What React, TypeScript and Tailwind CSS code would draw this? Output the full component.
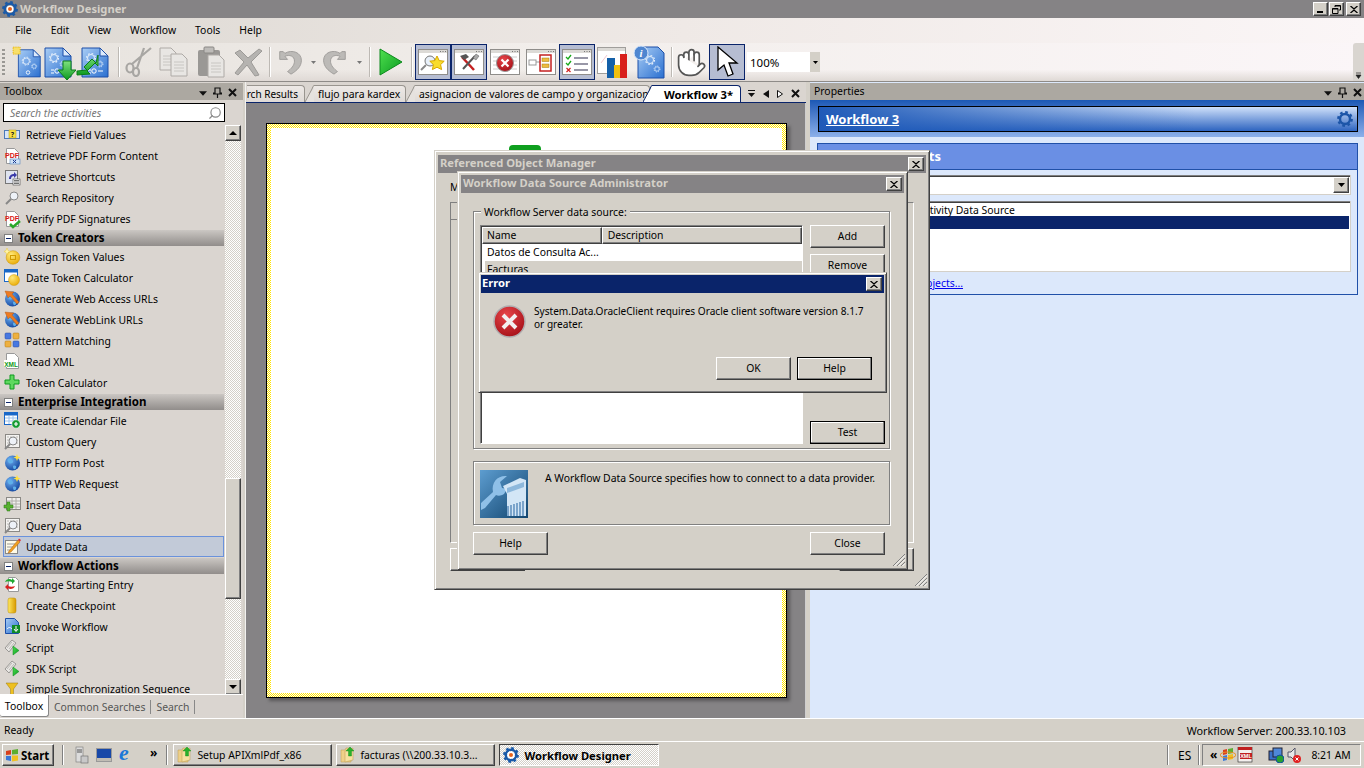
import React from "react";
import { Hand, Search } from "lucide-react";

const raised = "border border-t-white border-l-white border-r-[#404040] border-b-[#404040] shadow-[inset_-1px_-1px_#808080]";
const dith = "bg-[image:repeating-conic-gradient(#ffffff_0_25%,#d4d0c8_0_50%)] bg-[length:2px_2px]";

function Defs() {
  return (
    <svg className="absolute w-0 h-0">
      <defs>
        <linearGradient id="dblue" x1="0" y1="0" x2="1" y2="1"><stop offset="0" stopColor="#a9cdf5" /><stop offset="1" stopColor="#2a6fd0" /></linearGradient>
        <linearGradient id="green" x1="0" y1="0" x2="0" y2="1"><stop offset="0" stopColor="#7fe27f" /><stop offset="1" stopColor="#0c9a1e" /></linearGradient>
        <linearGradient id="gplay" x1="0" y1="0" x2="1" y2="1"><stop offset="0" stopColor="#4fe04f" /><stop offset="1" stopColor="#0a9a20" /></linearGradient>
        <radialGradient id="globe" cx=".35" cy=".3" r=".8"><stop offset="0" stopColor="#6fb0f2" /><stop offset="1" stopColor="#0d3f98" /></radialGradient>
        <radialGradient id="coin" cx=".35" cy=".3" r=".8"><stop offset="0" stopColor="#ffe97a" /><stop offset="1" stopColor="#e8a800" /></radialGradient>
        <radialGradient id="err" cx=".4" cy=".3" r=".8"><stop offset="0" stopColor="#e8464a" /><stop offset="1" stopColor="#a00c14" /></radialGradient>
        <linearGradient id="ds" x1="0" y1="0" x2="1" y2="1"><stop offset="0" stopColor="#5d9dd0" /><stop offset="1" stopColor="#12456f" /></linearGradient>
        <linearGradient id="cyl" x1="0" y1="0" x2="1" y2="0"><stop offset="0" stopColor="#ffe860" /><stop offset="1" stopColor="#d89a00" /></linearGradient>
      </defs>
    </svg>
  );
}

function Gear({ x, y, r, c = "#fff", w = 1 }: { x: number; y: number; r: number; c?: string; w?: number }) {
  const d = (2 * Math.PI * (r + w)) / 16;
  return (
    <g fill="none" stroke={c}>
      <circle cx={x} cy={y} r={r} strokeWidth={w} />
      <circle cx={x} cy={y} r={r + w} strokeWidth={w * 1.1} strokeDasharray={`${d} ${d}`} />
    </g>
  );
}

function AppGear({ s = 16 }: { s?: number }) {
  return (
    <svg width={s} height={s} viewBox="0 0 16 16" className="shrink-0">
      <circle cx="8" cy="8" r="5.2" fill="none" stroke="#1a5aa8" strokeWidth="2.6" />
      <circle cx="8" cy="8" r="6.8" fill="none" stroke="#1a5aa8" strokeWidth="2.2" strokeDasharray="2.67 2.67" />
      <circle cx="8" cy="8" r="3.6" fill="#fff" />
      <circle cx="8" cy="8" r="2" fill="#e8641a" />
    </svg>
  );
}

function BlueDoc({ children }: { children?: React.ReactNode }) {
  return (
    <svg width="32" height="34" viewBox="0 0 32 34" className="overflow-visible">
      <path d="M3 3h18l8 8v21H3z" fill="url(#dblue)" stroke="#1c4fa8" />
      <path d="M21 3l8 8h-8z" fill="#dbeafc" stroke="#1c4fa8" />
      <Gear x={12} y={13} r={3.5} c="#e6f0fc" w={1} />
      <Gear x={21} y={19} r={2.2} c="#cfe2f8" w={.8} />
      <circle cx="15" cy="26" r="2.2" fill="none" stroke="#fff" />
      <path d="M9 25h3M9 28h3M19 26h5" stroke="#fff" strokeWidth="1.2" />
      {children}
    </svg>
  );
}

function GrayDoc({ x = 0, y = 0 }: { x?: number; y?: number }) {
  return (
    <g transform={`translate(${x} ${y})`}>
      <path d="M0 0h11l5 5v17H0z" fill="#e8e6e3" stroke="#aeaaa6" />
      <path d="M3 8h10M3 11h10M3 14h10M3 17h10" stroke="#c8c6c2" />
    </g>
  );
}

function WinIcon({ children }: { children?: React.ReactNode }) {
  return (
    <svg width="30" height="30" viewBox="0 0 30 30">
      <rect x=".5" y="2.5" width="29" height="25" fill="#fff" stroke="#8f8d8a" />
      <rect x="1" y="3" width="28" height="3" fill="#dcdad6" />
      <path d="M22 4.5h1M24.5 4.5h1M27 4.5h1" stroke="#777" />
      {children}
    </svg>
  );
}

function Pressed({ children }: { children: React.ReactNode }) {
  return <div className="w-[36px] h-[36px] flex items-center justify-center border border-[#0a246a] bg-[#b6bdd2] shrink-0">{children}</div>;
}

function Sep({ ml }: { ml: string }) {
  return <div className={`w-px h-[30px] bg-[#bdb9b4] shadow-[1px_0_#fff] shrink-0 ${ml}`} />;
}

function Drop({ ml }: { ml: string }) {
  return <svg width="5" height="3" className={`shrink-0 ${ml}`} viewBox="0 0 5 3"><path d="M0 0h5L2.5 3z" fill="#777" /></svg>;
}

function Toolbar() {
  const U = "M6 4L2 4L2 13L11 13L8 9.5C13 7 19 9 19 15C19 20 15 24 11 27L15 30C22 26 27 21 27 14C27 5 16 1 8 6z";
  return (
    <div className="h-[38px] relative flex items-center pl-[2px] bg-[image:linear-gradient(to_bottom,transparent_70%,#dfd9d5),linear-gradient(to_right,#e6e2dd,#f2eeeb_40%,#fbf6f8)]">
      <div className="w-[3px] h-[26px] shrink-0 bg-[image:repeating-linear-gradient(to_bottom,#9a9894_0_2px,transparent_2px_4px)]" />
      <div className="ml-[9px] shrink-0 w-[26px] relative">
        <svg width="28" height="34" viewBox="0 0 32 34" className="overflow-visible">
          <path d="M5 3h17l8 8v23H5z" fill="url(#dblue)" stroke="#1c4fa8" />
          <path d="M22 3l8 8h-8z" fill="#dbeafc" stroke="#1c4fa8" />
          <Gear x={14} y={16} r={3.6} c="#e6f0fc" />
          <Gear x={23} y={22} r={2.2} c="#cfe2f8" w={.8} />
          <circle cx="16" cy="29" r="2" fill="none" stroke="#fff" />
          <path d="M-1 0h8v8h-8z" fill="#f7df6a" stroke="#eab400" strokeDasharray="1.5 1" />
        </svg>
      </div>
      <div className="ml-[2px] shrink-0"><BlueDoc><path d="M21 16h8v9h5L25 35l-9-10h5z" fill="url(#green)" stroke="#0d7d18" /></BlueDoc></div>
      <div className="ml-[5px] shrink-0"><BlueDoc><path d="M-2 26l10-1-3-3 8-8 4 4 2-8v11l-3-3-8 8 3 3-13 1z" fill="url(#green)" stroke="#0d7d18" /></BlueDoc></div>
      <Sep ml="ml-[7px]" />
      <svg width="28" height="30" viewBox="0 0 28 30" className="ml-[6px] shrink-0">
        <g fill="none" stroke="#a8a6a3" strokeWidth="2.200">
          <ellipse cx="5" cy="21" rx="3.500" ry="4.500" />
          <ellipse cx="11" cy="25" rx="3" ry="4" />
          <path d="M7 17L26 1M12 21L19 1" />
        </g>
      </svg>
      <svg width="30" height="30" viewBox="0 0 30 30" className="ml-[6px] shrink-0"><GrayDoc x={1} y={1} /><GrayDoc x={12} y={7} /></svg>
      <svg width="30" height="32" viewBox="0 0 30 32" className="ml-[8px] shrink-0"><rect x="1" y="4" width="22" height="26" rx="2" fill="#9a9895" /><rect x="7" y="1" width="10" height="6" rx="1" fill="#bdbbb8" stroke="#8a8885" /><GrayDoc x={11} y={9} /></svg>
      <svg width="30" height="30" viewBox="0 0 30 30" className="ml-[6px] shrink-0"><path d="M2 6l5-3 8 8L26 2l3 2-11 11 8 13-4 1-8-11-9 10-3-2 9-11z" fill="#b5b3b0" stroke="#9c9a97" /></svg>
      <Sep ml="ml-[6px]" />
      <svg width="26" height="32" viewBox="0 0 30 32" className="ml-[8px] shrink-0"><path d={U} fill="#bcbab7" stroke="#9a9895" /></svg>
      <Drop ml="ml-[7px]" />
      <svg width="26" height="32" viewBox="0 0 30 32" className="ml-[5px] shrink-0 -scale-x-100"><path d={U} fill="#bcbab7" stroke="#9a9895" /></svg>
      <Drop ml="ml-[10px]" />
      <Sep ml="ml-[7px]" />
      <svg width="24" height="28" viewBox="0 0 24 28" className="ml-[9px] shrink-0"><path d="M1 1l22 13L1 27z" fill="url(#gplay)" stroke="#0c8a1c" /></svg>
      <Sep ml="ml-[8px]" />
      <div className="ml-[3px] flex shrink-0">
        <Pressed><WinIcon><circle cx="12" cy="14" r="5" fill="#e8f0fa" stroke="#777" /><path d="M8 18l-5 5" stroke="#888" strokeWidth="2" /><path d="M19 9l2.2 4.6 5 .6-3.6 3.4 1 5-4.6-2.4-4.6 2.4 1-5-3.6-3.4 5-.6z" fill="#f8dc2c" stroke="#d8a800" /></WinIcon></Pressed>
        <Pressed><WinIcon><path d="M8 10l12 13" stroke="#c42020" strokeWidth="2.5" /><path d="M21 9L9 22" stroke="#555" strokeWidth="2" /><path d="M6 9l6-2 3 3-5 3z" fill="#555" /><path d="M19 11l3-4 3 2-3 4z" fill="#aaa" stroke="#555" strokeWidth=".5" /></WinIcon></Pressed>
      </div>
      <div className="ml-[3px] shrink-0"><WinIcon><path d="M3 10h24M3 14h24M3 18h24M3 22h24" stroke="#ccc" /><circle cx="15" cy="16" r="8.5" fill="url(#err)" stroke="#999" /><path d="M11.5 12.5l7 7M18.5 12.5l-7 7" stroke="#fff" strokeWidth="2.2" /></WinIcon></div>
      <div className="ml-[6px] shrink-0"><WinIcon><rect x="3" y="13" width="7" height="5" fill="#fff" stroke="#999" /><path d="M10 15h4" stroke="#999" /><rect x="14" y="8" width="11" height="16" fill="#fff" stroke="#c42020" strokeWidth="1.5" /><rect x="16" y="11" width="7" height="3.5" fill="#eebc40" stroke="#a07a10" strokeWidth=".5" /><rect x="16" y="17" width="7" height="3.5" fill="#eebc40" stroke="#a07a10" strokeWidth=".5" /></WinIcon></div>
      <div className="ml-[3px] shrink-0"><Pressed><WinIcon><path d="M4 10l2 2 3-4M4 16l2 2 3-4" fill="none" stroke="#18a818" strokeWidth="1.3" /><path d="M4.5 21l4 4M8.5 21l-4 4" stroke="#d02020" strokeWidth="1.2" /><path d="M12 11h14M12 17h14M12 23h14" stroke="#77758a" strokeWidth="1.3" /></WinIcon></Pressed></div>
      <svg width="32" height="34" viewBox="0 0 32 34" className="ml-[2px] shrink-0">
        <rect x=".5" y="2.5" width="28" height="26" fill="#fff" stroke="#a09e9b" /><rect x="1" y="3" width="27" height="3" fill="#dcdad6" />
        <path d="M4 18l6-8" stroke="#f2c8d0" />
        <path d="M10 13h8v20h-8z" fill="#1560a8" /><path d="M17 20h6v13h-6z" fill="#f0c010" /><path d="M23 9h7v24h-7z" fill="#d8201c" />
      </svg>
      <svg width="32" height="34" viewBox="0 0 32 34" className="ml-[4px] shrink-0 overflow-visible">
        <path d="M5 2h20l6 6v25H5z" fill="url(#dblue)" stroke="#1c4fa8" />
        <Gear x={17} y={15} r={3.5} c="#e6f0fc" /><Gear x={24} y={24} r={2.2} c="#cfe2f8" w={.8} />
        <circle cx="8" cy="8" r="7" fill="#4f86d0" stroke="#dbeafc" />
        <text x="8" y="12" textAnchor="middle" fontSize="11" fontWeight="700" fontStyle="italic" fill="#fff" fontFamily="Liberation Serif, serif">i</text>
      </svg>
      <Sep ml="ml-[6px]" />
      <Hand size={31} strokeWidth={1.3} color="#555" fill="#fff" className="ml-[4px] shrink-0 -scale-x-100" />
      <div className="ml-[2px] shrink-0">
        <Pressed><svg width="26" height="32" viewBox="0 0 26 32"><path d="M4 1v23l6-5 4 11 5-2-4-11h8z" fill="#fff" stroke="#000" strokeWidth="1.3" /></svg></Pressed>
      </div>
      <div className="ml-[2px] w-[73px] h-[20px] bg-white flex items-center justify-between shrink-0">
        <span className="pl-[3px] text-[11.5px]">100%</span>
        <div className="w-[10px] h-full bg-[#d4d0c8] flex items-center justify-center"><svg width="5" height="3"><path d="M0 0h5L2.5 3z" fill="#000" /></svg></div>
      </div>
      <div className="absolute right-0 top-0 bottom-0 w-[11px] bg-[#d9d5d0] rounded-tl-[3px] flex items-end justify-center pb-[2px]">
        <svg width="7" height="7" viewBox="0 0 7 7"><path d="M1 1h5M1 3h5L3.500 6.500z" stroke="#222" fill="#222" strokeWidth=".7" /></svg>
      </div>
    </div>
  );
}

const PanelBtns = () => (
  <div className="flex items-center gap-[6px] pt-[2px]">
    <svg width="8" height="5" viewBox="0 0 9 5" className="mt-[2px]"><path d="M0 0h9L4.500 5z" fill="#111" /></svg>
    <svg width="9" height="11" viewBox="0 0 9 11"><path d="M2 1h5v5h2v1H0V6h2zM4.500 7v4" fill="none" stroke="#111" strokeWidth="1.200" /></svg>
    <svg width="9" height="9" viewBox="0 0 9 9"><path d="M1 1l7 7M8 1L1 8" stroke="#111" strokeWidth="2" /></svg>
  </div>
);

/* small icons */
const S = ({ children }: { children: React.ReactNode }) => <svg width="17" height="17" viewBox="0 0 17 17" className="shrink-0 overflow-visible">{children}</svg>;
const Page = () => <><path d="M2.500 .5h8l4 4v11h-12z" fill="#fff" stroke="#999" /></>;
const Pdf = () => <text x="8" y="10" textAnchor="middle" fontSize="7" fontWeight="700" fill="#d81818" fontFamily="Liberation Sans, sans-serif">PDF</text>;
const Mag = ({ x = 0, y = 0, c = "#ddd" }: { x?: number; y?: number; c?: string }) => <g transform={`translate(${x} ${y})`}><circle cx="10" cy="6" r="4" fill={c === "#ddd" ? "#eef2f8" : c} stroke="#888" /><path d="M7 9l-5 5" stroke="#888" strokeWidth="2" /></g>;
const Globe = ({ spark, arrow }: { spark?: boolean; arrow?: boolean }) => (
  <>
    <circle cx="8.500" cy="9" r="7.500" fill="url(#globe)" />
    <path d="M4 5c2-2 4 0 5 2s-3 3-4 2-2-3-1-4zM9 12c2-1 4 0 3 2s-3 2-3-2z" fill="#5fb0ea" />
    {spark && <path d="M13 0l1 2.500 2.500 1-2.500 1-1 2.500-1-2.500-2.500-1 2.500-1z" fill="#ffe040" />}
    {arrow && <path d="M1 1l9 1-2 2 7 8-2 2-7-8-2 2z" fill="#ee7a20" stroke="#a85010" strokeWidth=".4" />}
  </>
);
const WinSm = () => <><rect x="1.500" y="1.500" width="14" height="13" fill="#f4f3f1" stroke="#8b8985" /><path d="M3 4h11M3 7h11M3 10h11" stroke="#b8b6b2" strokeDasharray="2 1" /></>;

const icons: Record<string, React.ReactNode> = {
  field: <S><rect x=".5" y="3.500" width="15" height="8" fill="#d6e4f6" stroke="#4a78b8" /><rect x="5" y="3" width="7" height="8" fill="#f6e040" stroke="#b89810" strokeWidth=".5" /><text x="8.500" y="10" textAnchor="middle" fontSize="7" fontWeight="700" fill="#222">?</text></S>,
  pdfForm: <S><Page /><Pdf /><rect x="6" y="11" width="10" height="5" fill="#cfe2f6" stroke="#5888c0" strokeWidth=".6" /><path d="M9 12l3 3M12 12l-3 3" stroke="#1a3a90" /></S>,
  short: <S><rect x="1.500" y="1.500" width="12" height="13" fill="#dfe3ee" stroke="#777" /><path d="M5 10c0-4 3-5 5-5V3l3 3-3 3V7c-2 0-3 1-3 3z" fill="#3a3aa8" /><rect x="9" y="10" width="7" height="6" fill="#fff" stroke="#444" strokeWidth=".6" /><path d="M10 11.500h5M10 13h5M10 14.500h5" stroke="#333" strokeWidth=".7" /></S>,
  search: <S><Mag /></S>,
  pdfSig: <S><Page /><Pdf /><path d="M6 13l3 3 7-6" fill="none" stroke="#2aa82a" strokeWidth="2.500" /></S>,
  token: <S><circle cx="9" cy="9.500" r="6.800" fill="url(#coin)" stroke="#c89000" strokeWidth=".5" /><rect x="6.500" y="7.500" width="5" height="4" fill="none" stroke="#d09a00" /><path d="M3 0l1 2.500 2.500 1-2.500 1-1 2.500-1-2.500-2-1 2-1z" fill="#fff6a8" stroke="#e8c020" strokeWidth=".4" /></S>,
  date: <S><rect x=".5" y=".5" width="13" height="12" fill="#fff" stroke="#1a68c8" /><rect x=".5" y=".5" width="13" height="3" fill="#1a68c8" /><circle cx="10" cy="11" r="5.500" fill="url(#coin)" stroke="#c89000" strokeWidth=".4" /></S>,
  web: <S><Globe arrow /></S>,
  pattern: <S><rect x="1" y="1" width="6" height="6" rx="1" fill="#4878e0" stroke="#2a4aa0" strokeWidth=".5" /><rect x="9" y="1" width="6" height="6" rx="1" fill="#eeb040" stroke="#b07a10" strokeWidth=".5" /><rect x="1" y="9" width="6" height="6" rx="1" fill="#eeb040" stroke="#b07a10" strokeWidth=".5" /><rect x="9" y="9" width="6" height="6" rx="1" fill="#4878e0" stroke="#2a4aa0" strokeWidth=".5" /></S>,
  xml: <S><Page /><rect x="0" y="7" width="13" height="7" fill="#fff" /><text x="7" y="13.500" textAnchor="middle" fontSize="6.500" fontWeight="700" fill="#109a20" fontFamily="Liberation Sans, sans-serif">XML</text></S>,
  plus: <S><path d="M6 1h4v5h5v4h-5v5H6v-5H1V6h5z" fill="#5fd85f" stroke="#109a20" /></S>,
  cal: <S><rect x=".5" y=".5" width="13" height="12" fill="#fff" stroke="#1a68c8" /><rect x=".5" y=".5" width="13" height="3" fill="#1a68c8" /><path d="M1 6h12M1 9h12M5 4v8M9 4v8" stroke="#9cc2ec" /><circle cx="12" cy="12" r="4.200" fill="#129a30" stroke="#fff" strokeWidth=".6" /><path d="M10 12h4M12 10v4" stroke="#fff" strokeWidth="1.200" /></S>,
  query: <S><WinSm /><Mag x={-1} y={2} /></S>,
  http: <S><Globe spark /></S>,
  insert: <S><rect x="2.500" y="1.500" width="14" height="12" fill="#f0efed" stroke="#8b8985" /><path d="M3 5h13M3 8h13M3 11h13M8 2v11M12 2v11" stroke="#b0aeaa" /><path d="M3 6h3v3h3v3H6v3H3v-3H0V9h3z" fill="#58b030" stroke="#2a7a14" strokeWidth=".5" /></S>,
  update: <S><rect x="1.500" y="2.500" width="12" height="13" fill="#fffbe8" stroke="#888" /><path d="M3 6h8M3 9h6M3 12h5" stroke="#999" /><path d="M5 13l9-11 2 2-9 10-3 1z" fill="#f0a020" stroke="#b06010" strokeWidth=".5" /><path d="M14 2l1-1.500 2 1.500-1 1.500z" fill="#e03030" /></S>,
  change: <S><path d="M4.500 1.500h7l3 3v11h-10z" fill="#fff" stroke="#999" /><path d="M1 6c1-3 5-4 7-2V2l3 3-3 3V6C6 5 3 5 1 6z" fill="#20a830" /><path d="M11 10c-1 3-5 4-7 2v2L1 11l3-3v2c2 1 5 1 7 0z" fill="#d82020" /></S>,
  check: <S><rect x="4" y="1" width="8" height="15" rx="2" fill="url(#cyl)" stroke="#b88a00" strokeWidth=".5" /></S>,
  invoke: <S><path d="M1.500 .5h9l4 4v11h-13z" fill="url(#dblue)" stroke="#1c4fa8" /><rect x="8" y="7" width="8" height="8" fill="#108a28" /><path d="M12 8v5M10 11l2 2.500 2-2.500" stroke="#fff" fill="none" /><path d="M3 11c2-2 3-2 5 0" stroke="#fff" fill="none" /></S>,
  script: <S><path d="M1 9l7-8 4 3-7 9z" fill="#e8e6e3" stroke="#9a9895" /><path d="M3 9l5-6M5 10l5-6" stroke="#bdbab6" /><path d="M9 7l6 4.500-6 4.500z" fill="url(#gplay)" stroke="#0c8a1c" strokeWidth=".5" /></S>,
  sync: <S><path d="M2 2h12L9.500 8v6h-3V8z" fill="#eec020" stroke="#9a7a10" strokeWidth=".5" /></S>,
};

function Item({ icon, label, active, up }: { icon: string; label: string; active?: boolean; up?: boolean }) {
  return (
    <div className={`h-[21px] flex items-center shrink-0 ${active ? "ml-[3px] bg-[#c2cad8] border border-[#6a92dc]" : "pl-[4px]"}`}>
      <div className="w-[22px] shrink-0 flex items-center">{icons[icon]}</div>
      <span className={`whitespace-nowrap ${up ? "" : "pt-[2px]"}`}>{label}</span>
    </div>
  );
}

function Head({ label, gap }: { label: string; gap?: boolean }) {
  return (
    <div className={`h-[16px] shrink-0 flex items-center pl-[4px] bg-gradient-to-b from-[#cbc7c3] to-[#918d8b] ${gap ? "mt-px" : ""}`}>
      <div className="w-[9px] h-[9px] border border-[#808080] bg-white flex items-center justify-center shrink-0"><div className="w-[5px] h-px bg-[#0a246a]" /></div>
      <span className="ml-[5px] font-bold text-[11.5px] pb-[2px] whitespace-nowrap">{label}</span>
    </div>
  );
}

function ArrowBtn({ down }: { down?: boolean }) {
  return (
    <div className={`w-[16px] h-[16px] bg-[#d4d0c8] ${raised} flex items-center justify-center shrink-0`}>
      <svg width="8" height="4" viewBox="0 0 8 4"><path d={down ? "M0 0h8L4 4z" : "M0 4h8L4 0z"} fill="#000" /></svg>
    </div>
  );
}

function Toolbox() {
  return (
    <div className="w-[243px] shrink-0 flex flex-col bg-[#dad5d0]">
      <div className="h-[17px] mt-px flex items-center justify-between pl-[4px] pr-[6px] bg-[#aca8a1]">
        <span>Toolbox</span>
        <PanelBtns />
      </div>
      <div className="h-[25px] shrink-0 pl-[3px] pt-[3px]">
        <div className="w-[222px] h-[19px] bg-white border border-black flex items-center justify-between pl-[6px] pr-[2px]">
          <span className="italic text-[#777] pt-px">Search the activities</span>
          <Search size={14} color="#888" className="-scale-x-100" />
        </div>
      </div>
      <div className="h-[570px] flex shrink-0">
        <div className="w-[224px] overflow-hidden flex flex-col">
          <Item up icon="field" label="Retrieve Field Values" />
          <Item up icon="pdfForm" label="Retrieve PDF Form Content" />
          <Item up icon="short" label="Retrieve Shortcuts" />
          <Item up icon="search" label="Search Repository" />
          <Item up icon="pdfSig" label="Verify PDF Signatures" />
          <Head label="Token Creators" />
          <Item icon="token" label="Assign Token Values" />
          <Item icon="date" label="Date Token Calculator" />
          <Item icon="web" label="Generate Web Access URLs" />
          <Item icon="web" label="Generate WebLink URLs" />
          <Item icon="pattern" label="Pattern Matching" />
          <Item icon="xml" label="Read XML" />
          <Item icon="plus" label="Token Calculator" />
          <Head label="Enterprise Integration" gap />
          <Item icon="cal" label="Create iCalendar File" />
          <Item icon="query" label="Custom Query" />
          <Item icon="http" label="HTTP Form Post" />
          <Item icon="http" label="HTTP Web Request" />
          <Item icon="insert" label="Insert Data" />
          <Item icon="query" label="Query Data" />
          <Item icon="update" label="Update Data" active />
          <Head label="Workflow Actions" gap />
          <Item icon="change" label="Change Starting Entry" />
          <Item icon="check" label="Create Checkpoint" />
          <Item icon="invoke" label="Invoke Workflow" />
          <Item icon="script" label="Script" />
          <Item icon="script" label="SDK Script" />
          <Item up icon="sync" label="Simple Synchronization Sequence" />
        </div>
        <div className={`w-[16px] ml-px flex flex-col ${dith}`}>
          <ArrowBtn />
          <div className="h-[337px] shrink-0" />
          <div className={`h-[121px] shrink-0 bg-[#d4d0c8] ${raised}`} />
          <div className="flex-1" />
          <ArrowBtn down />
        </div>
      </div>
      <div className="flex-1 flex items-start border-t border-white mt-[-1px]">
        <div className="h-[22px] w-[49px] bg-white rounded-b-[3px] border-r border-b border-[#888] flex items-center justify-center pt-[2px]">Toolbox</div>
        <span className="pl-[5px] pr-[5px] mt-[5px] pt-px text-[#555] border-r border-[#888] whitespace-nowrap">Common Searches</span>
        <span className="pl-[5px] pr-[5px] mt-[5px] pt-px text-[#555] border-r border-[#888]">Search</span>
      </div>
    </div>
  );
}

function Tab({ label, w, active, first }: { label: string; w: string; active?: boolean; first?: boolean }) {
  return (
    <div className={`flex h-[17px] shrink-0 ${active ? "-ml-[7px] z-10" : ""}`}>
      {!first && (
        <svg width="9" height="17" viewBox="0 0 9 17" className="shrink-0">
          <path d="M0 17L8 3Q9 .5 9 .5V17z" fill={active ? "#fff" : "#e6e2de"} />
          <path d="M0 17L7 4Q8 .5 9 .5" fill="none" stroke={active ? "#0a246a" : "#99958f"} />
        </svg>
      )}
      <div className={`${w} ${active ? "bg-white font-bold border-[#0a246a] text-[11.2px] pl-[12px]" : "bg-gradient-to-b from-[#ede9e6] to-[#dfdad6] border-[#99958f]"} border-t border-r rounded-tr-[4px] flex items-center ${first ? "justify-end pr-[6px] text-[10px]" : active ? "" : "pl-[4px]"} whitespace-nowrap overflow-hidden`}>{label}</div>
    </div>
  );
}

function DocArea() {
  return (
    <div className="w-[561px] ml-[2px] shrink-0 flex flex-col border-l border-white/70">
      <div className="h-[21px] flex items-end bg-[#dad5d0] border-b border-[#0a246a] pl-px relative">
        <Tab first label="rch Results" w="w-[58px]" />
        <Tab label="flujo para kardex" w="w-[92px]" />
        <Tab label="asignacion de valores de campo y organizacion" w="w-[235px]" />
        <Tab active label="Workflow 3*" w="w-[89px]" />
        <div className="ml-[7px] h-[17px] flex items-center gap-[7px]">
          <svg width="7" height="7" viewBox="0 0 7 7"><path d="M0 0h7v1H0zM0 3h7L3.500 7z" fill="#111" /></svg>
          <svg width="6" height="8" viewBox="0 0 6 8" className="ml-px"><path d="M6 0v8L0 4z" fill="#111" /></svg>
          <svg width="6" height="8" viewBox="0 0 6 8" className="ml-px"><path d="M.5 .5v7L5.500 4z" fill="#fff" stroke="#111" /></svg>
          <svg width="9" height="9" viewBox="0 0 9 9" className="ml-px"><path d="M1 1l7 7M8 1L1 8" stroke="#111" strokeWidth="2" /></svg>
        </div>
      </div>
      <div className="flex-1 bg-[#858385] pl-5 pr-[18px] py-5 border-r border-white/60">
        <div className="h-full border border-black bg-[image:repeating-conic-gradient(#ffe400_0_25%,#ffffff_0_50%)] bg-[length:2px_2px] p-[4px] shadow-[3px_3px_3px_#5a585a]">
          <div className="h-full bg-white pt-[17px] flex justify-center">
            <div className="w-[32px] h-[12px] bg-[#0f9f1f] rounded-t-[4px] mr-[4px]" />
          </div>
        </div>
      </div>
    </div>
  );
}

function Props() {
  return (
    <div className="flex-1 ml-[4px] flex flex-col bg-[#dce8fb]">
      <div className="h-[17px] mt-px flex items-center justify-between pl-[4px] pr-[4px] bg-[#aca8a1]">
        <span>Properties</span>
        <PanelBtns />
      </div>
      <div className="h-[37px] px-[8px] pt-[6px] bg-gradient-to-b from-[#1b58b5] to-[#8cb0ea]">
        <div className="w-[540px] h-[26px] border border-black flex items-center justify-between pl-[7px] pr-[4px] bg-[image:linear-gradient(to_right,#1f5ab8,transparent_70%),linear-gradient(to_bottom,#cfe0fa,#2d64c0)]">
          <span className="text-white font-bold underline text-[13px]">Workflow 3</span>
          <svg width="16" height="16" viewBox="0 0 16 16"><circle cx="8" cy="8" r="5" fill="none" stroke="#1c55a8" strokeWidth="2.400" /><circle cx="8" cy="8" r="6.800" fill="none" stroke="#1c55a8" strokeWidth="2.200" strokeDasharray="2.670 2.670" /></svg>
        </div>
      </div>
      <div className="ml-[7px] mt-[6px] w-[541px] h-[152px] border border-[#2050a8] flex flex-col">
        <div className="h-[26px] shrink-0 bg-[#6a8fe4] border-b border-[#2050a8] flex items-center">
          <span className="w-[123px] text-right text-white font-bold text-[13px] whitespace-nowrap">Data Objects</span>
        </div>
        <div className="ml-[8px] mt-[5px] w-[525px] h-[20px] bg-white shadow-[inset_1px_1px_#808080,inset_2px_2px_#404040] border-b border-r border-[#d4d0c8] flex justify-end items-center pr-px">
          <div className={`w-[16px] h-[16px] bg-[#d4d0c8] ${raised} flex items-center justify-center`}><svg width="7" height="4" viewBox="0 0 7 4"><path d="M0 0h7L3.500 4z" fill="#000" /></svg></div>
        </div>
        <div className="ml-[8px] mt-[6px] w-[525px] h-[71px] bg-white shadow-[inset_1px_1px_#808080,inset_2px_2px_#404040] border-b border-r border-[#d4d0c8] pt-[2px] pl-[2px]">
          <div className="h-[13px] flex items-center pl-[90px] pt-px">Activity Data Source</div>
          <div className="h-[13px] w-[521px] bg-[#0a246a]" />
        </div>
        <div className="mt-[5px] w-[145px] text-right text-[#0000ee] underline whitespace-nowrap">Referenced objects...</div>
      </div>
    </div>
  );
}

function XBtn() {
  return (
    <div className={`w-[16px] h-[14px] bg-[#d4d0c8] ${raised} flex items-center justify-center shrink-0`}>
      <svg width="8" height="7" viewBox="0 0 8 7"><path d="M.5 0l3.500 3L7.500 0M.5 7l3.500-3 3.500 3" fill="none" stroke="#000" strokeWidth="1.300" /></svg>
    </div>
  );
}

function Grip({ className }: { className: string }) {
  return (
    <svg width="14" height="14" viewBox="0 0 14 14" className={`absolute ${className}`}>
      <path d="M13 1L1 13M13 5L5 13M13 9L9 13" stroke="#808080" strokeWidth="1" />
      <path d="M13 2.500L2.500 13M13 6.500L6.500 13M13 10.500L10.500 13" stroke="#fff" strokeWidth="1" />
    </svg>
  );
}

function Btn({ label, def, className = "" }: { label: string; def?: boolean; className?: string }) {
  return (
    <div className={`w-[75px] h-[23px] bg-[#d4d0c8] flex items-center justify-center shrink-0 ${def ? "border border-black shadow-[inset_-1px_-1px_#808080,inset_1px_1px_#fff]" : raised} ${className}`}>{label}</div>
  );
}

function Title({ label, navy, className = "" }: { label: string; navy?: boolean; className?: string }) {
  return (
    <div className={`h-[18px] flex items-center justify-between pl-[2px] pr-[2px] shrink-0 ${navy ? "bg-[#0a246a] text-white" : "bg-[#858385] text-[#d4d0c8]"} ${className}`}>
      <span className="font-bold text-[11.2px] pb-[3px]">{label}</span>
      <XBtn />
    </div>
  );
}

const dlg = "absolute bg-[#d4d0c8] border border-t-[#d4d0c8] border-l-[#d4d0c8] border-r-[#404040] border-b-[#404040] shadow-[inset_1px_1px_#fff,inset_-1px_-1px_#808080]";
const etched = "border border-[#808080] shadow-[1px_1px_#fff,inset_1px_1px_#fff]";

function RefDialog() {
  return (
    <div className={`${dlg} left-[434px] top-[150px] w-[496px] h-[440px] pt-[3px] px-[3px] flex flex-col`}>
      <Title label="Referenced Object Manager" className="mt-px" />
      <div className="pl-[12px] mt-[8px]">M</div>
      <div className="mx-[12px] mt-[8px] h-[341px] border border-t-[#808080] border-l-[#808080] border-r-white border-b-white">
        <div className="h-[17px] w-[30px] border-b border-[#808080]" />
      </div>
      <div className="mx-[12px] mt-[5px] flex justify-between">
        <Btn label="" />
        <Btn label="" />
      </div>
      <Grip className="right-[1px] bottom-[2px]" />
    </div>
  );
}

function DsDialog() {
  return (
    <div className={`${dlg} left-[457px] top-[171px] w-[451px] h-[399px] pt-[3px] px-[3px] flex flex-col`}>
      <Title label="Workflow Data Source Administrator" />
      <div className={`relative ml-[12px] mt-[18px] w-[417px] h-[238px] pl-[6px] pt-[13px] pb-[4px] flex gap-[7px] ${etched}`}>
        <span className="absolute left-[7px] -top-[6px] bg-[#d4d0c8] px-[3px] whitespace-nowrap">Workflow Server data source:</span>
        <div className="w-[323px] bg-white border border-t-[#808080] border-l-[#808080] border-r-white border-b-white shadow-[inset_1px_1px_#404040] pl-px pt-px">
          <div className="h-[17px] flex">
            <div className={`w-[120px] h-full bg-[#d4d0c8] ${raised} pl-[4px] pt-px`}>Name</div>
            <div className={`w-[201px] h-full bg-[#d4d0c8] ${raised} pl-[5px] pt-px`}>Description</div>
          </div>
          <div className="h-[17px] pl-[5px] flex items-center">Datos de Consulta Ac...</div>
          <div className="h-[17px] pl-[2px] ml-[3px] bg-[#d4d0c8] flex items-center">Facturas</div>
        </div>
        <div className="flex flex-col gap-[6px]">
          <Btn label="Add" />
          <Btn label="Remove" />
          <Btn label="Test" def className="mt-auto" />
        </div>
      </div>
      <div className={`ml-[12px] mt-[12px] w-[417px] h-[64px] pl-[6px] pt-[8px] flex ${etched}`}>
        <svg width="48" height="48" viewBox="0 0 48 48" className="shrink-0">
          <rect width="48" height="48" fill="url(#ds)" />
          <path d="M1 40V33L13 22C11 12 18 5 27 6L20 12L22 18L27 19L24 24C21 26 18 26 16 25L5 38z" fill="#8fc0e8" />
          <path d="M23 16L40 8L46 10V46H27V24z" fill="#d3e6f6" />
          <path d="M27 18L44 12v5L27 23z" fill="#8db8dc" />
          <path d="M28 36v10M31 35v11M34 34v12M37 33v13M40 32v14M43 31v15" stroke="#4c82b4" strokeWidth="1.300" />
        </svg>
        <span className="ml-[17px] mt-[2px] whitespace-nowrap">A Workflow Data Source specifies how to connect to a data provider.</span>
      </div>
      <div className="ml-[12px] mt-[7px] w-[412px] flex justify-between">
        <Btn label="Help" />
        <Btn label="Close" />
      </div>
      <Grip className="right-[1px] bottom-[2px]" />
    </div>
  );
}

function ErrDialog() {
  return (
    <div className={`${dlg} left-[478px] top-[272px] w-[409px] h-[121px] pt-[2px] px-[2px]`}>
      <Title navy label="Error" className="pl-px" />
      <div className="flex pl-[12px] pt-[12px]">
        <svg width="33" height="33" viewBox="0 0 33 33" className="shrink-0">
          <circle cx="16.500" cy="16.500" r="15.500" fill="url(#err)" stroke="#b0aeb0" strokeWidth="1.500" />
          <path d="M10 10l13 13M23 10L10 23" stroke="#f2f0f0" strokeWidth="4" />
        </svg>
        <div className="ml-[8px] leading-[13px] w-[336px] text-[10.1px]">System.Data.OracleClient requires Oracle client software version 8.1.7 or greater.</div>
      </div>
      <div className="absolute left-[237px] top-[84px] flex gap-[6px]">
        <Btn label="OK" />
        <Btn label="Help" def />
      </div>
    </div>
  );
}

function Folder() {
  return (
    <svg width="16" height="18" viewBox="0 0 16 18" className="shrink-0">
      <path d="M1 4h4l1-2h5v14H1z" fill="#eed088" stroke="#b89850" strokeWidth=".5" />
      <path d="M5 16V5l8-3v12z" fill="#f6e0a0" stroke="#b89850" strokeWidth=".5" />
      <path d="M10 1l4 4h-2.500v5h-3V5H6z" fill="#2ab02a" stroke="#108a18" strokeWidth=".4" />
    </svg>
  );
}

function Taskbar() {
  const taskBtn = `w-[159px] h-[22px] bg-[#d4d0c8] ${raised} flex items-center pl-[3px] shrink-0 whitespace-nowrap`;
  return (
    <div className="h-[26px] bg-[#d4d0c8] flex items-center pl-[2px] pr-[3px]">
      <div className={`w-[52px] h-[22px] ${raised} flex items-center pl-[2px] gap-0 font-bold text-[11.5px] shrink-0`}>
        <svg width="14" height="14" viewBox="0 0 14 14" className="mr-[2px]"><path d="M1 3l5-1v4.500L1 7z" fill="#d8401c" /><path d="M7 2l6-1v5l-6 .500z" fill="#5cae30" /><path d="M1 8l5 0v5l-5-1z" fill="#3a78d8" /><path d="M7 7.500h6v5l-6 1z" fill="#f0c020" /></svg>
        Start
      </div>
      <div className="ml-[8px] w-[2px] h-[20px] border-l border-[#808080] border-r border-r-white shrink-0" />
      <svg width="16" height="18" viewBox="0 0 16 18" className="ml-[9px] shrink-0"><rect x="3" y="1" width="7" height="15" fill="#dcdcdc" stroke="#777" strokeWidth=".6" /><path d="M4 4h5M4 6h5" stroke="#555" /><rect x="8" y="10" width="7" height="7" fill="#c8c8c8" stroke="#666" strokeWidth=".6" /></svg>
      <svg width="16" height="14" viewBox="0 0 16 14" className="ml-[7px] shrink-0"><rect x=".5" y=".5" width="15" height="13" fill="#1848a8" stroke="#999" /><rect x="1" y="10" width="14" height="3" fill="#c0bcb4" /></svg>
      <span className="ml-[7px] text-[#1a78d8] italic font-bold text-[22px] leading-none [font-family:'Liberation_Serif',serif] w-[16px] shrink-0 -mt-[4px]">e</span>
      <span className="ml-[15px] font-bold text-[12px] -mt-[5px] shrink-0">»</span>
      <div className="ml-[9px] w-[2px] h-[20px] border-l border-[#808080] border-r border-r-white shrink-0" />
      <div className={`${taskBtn} ml-[5px] gap-[4px]`}><Folder />Setup APIXmlPdf_x86</div>
      <div className={`${taskBtn} ml-[4px] gap-[4px]`}><Folder />facturas (\\200.33.10.3...</div>
      <div className={`w-[160px] h-[22px] ml-[4px] flex items-center pl-[3px] gap-[5px] font-bold text-[11.2px] shrink-0 border border-t-[#404040] border-l-[#404040] border-r-white border-b-white ${dith}`}><AppGear />Workflow Designer</div>
      <div className="ml-auto flex items-center">
        <div className="w-[2px] h-[20px] border-l border-[#808080] border-r border-r-white" />
        <span className="ml-[9px] text-[12px] w-[17px]">ES</span>
        <div className="ml-[3px] w-[2px] h-[20px] border-l border-[#808080] border-r border-r-white" />
        <div className="ml-[2px] w-[159px] h-[22px] border border-t-[#808080] border-l-[#808080] border-r-white border-b-white flex items-center pl-[7px]">
          <span className="font-bold text-[12px] -mt-[2px]">«</span>
          <svg width="16" height="16" viewBox="0 0 16 16" className="ml-[3px]"><path d="M3 3l4-1v5l-4 1z" fill="#d8401c" /><path d="M8 2l5-1v5l-5 1z" fill="#5cae30" /><path d="M3 9l4-1v5l-4 1z" fill="#3a78d8" /><path d="M8 8l5-1v5l-5 1z" fill="#f0c020" /><ellipse cx="8" cy="8" rx="8" ry="3" fill="none" stroke="#e89020" /></svg>
          <svg width="16" height="16" viewBox="0 0 16 16" className="ml-[1px]"><rect x="1" y="0" width="14" height="15" fill="#f4f0ee" stroke="#222" strokeWidth=".6" /><rect x="1" y="0" width="14" height="3" fill="#c02020" /><rect x="3" y="6" width="12" height="6" fill="#c02020" /><text x="9" y="11.300" textAnchor="middle" fontSize="5.500" fontWeight="700" fill="#fff" fontFamily="Liberation Sans, sans-serif">XML</text></svg>
          <svg width="16" height="16" viewBox="0 0 16 16" className="ml-[15px]"><rect x="1" y="4" width="9" height="9" fill="#3a70c8" stroke="#223" /><rect x="5" y="1" width="9" height="9" fill="#4f88d8" stroke="#223" /><circle cx="12" cy="12" r="4" fill="#28a030" stroke="#1050a0" /></svg>
          <svg width="16" height="16" viewBox="0 0 16 16" className="ml-[2px]"><path d="M2 5h3l4-4v13L5 10H2z" fill="#e8e8e8" stroke="#556" /><circle cx="11" cy="12" r="4" fill="#e02020" /><path d="M9.500 10.500l3 3M12.500 10.500l-3 3" stroke="#fff" /></svg>
          <span className="ml-[9px] whitespace-nowrap">8:21 AM</span>
        </div>
      </div>
    </div>
  );
}

export default function App() {
  return (
    <div className="relative w-[1364px] h-[768px] overflow-hidden flex flex-col bg-[#d4d0c8] text-black text-[10.4px] leading-[13px] [font-family:'Noto_Sans',sans-serif]">
      <Defs />
      <div className="h-[18px] shrink-0 bg-[#858385] flex items-center pl-[2px] pr-[3px]">
        <AppGear />
        <span className="ml-[2px] font-bold text-[#d4d0c8] text-[11.2px] pb-px">Workflow Designer</span>
        <div className="ml-auto flex">
          <div className={`w-[15px] h-[14px] bg-[#d4d0c8] ${raised} flex items-end pb-[2px] pl-[3px]`}><div className="w-[6px] h-[2px] bg-black" /></div>
          <div className={`ml-px w-[15px] h-[14px] bg-[#d4d0c8] ${raised} flex items-center justify-center`}><svg width="9" height="9" viewBox="0 0 9 9"><path d="M3 2V.5h5.500V5H7M.5 3.500h5.500V8.500H.5z" fill="none" stroke="#000" /><path d="M3 1h5.500M.5 4h5.500" stroke="#000" /></svg></div>
          <div className="ml-[2px]"><div className={`w-[15px] h-[14px] bg-[#d4d0c8] ${raised} flex items-center justify-center`}><svg width="8" height="7" viewBox="0 0 8 7"><path d="M.5 0l3.500 3L7.500 0M.5 7l3.500-3 3.500 3" fill="none" stroke="#000" strokeWidth="1.300" /></svg></div></div>
        </div>
      </div>
      <div className="h-[25px] shrink-0 flex items-center gap-[19px] pl-[15px] bg-gradient-to-r from-[#dcd8d2] via-[#efe9e6] to-[#fbf6f7]">
        <span>File</span><span>Edit</span><span>View</span><span>Workflow</span><span>Tools</span><span>Help</span>
      </div>
      <Toolbar />
      <div className="h-px shrink-0 bg-[#8e8b88]" />
      <div className="h-[636px] shrink-0 flex">
        <Toolbox />
        <DocArea />
        <Props />
      </div>
      <div className="h-[23px] shrink-0 border-t border-white flex items-center justify-between pl-[4px] pr-[18px]">
        <span>Ready</span>
        <span className="text-[10.8px]">Workflow Server: 200.33.10.103</span>
      </div>
      <div className="h-px shrink-0 bg-white" />
      <Taskbar />
      <RefDialog />
      <DsDialog />
      <ErrDialog />
    </div>
  );
}
